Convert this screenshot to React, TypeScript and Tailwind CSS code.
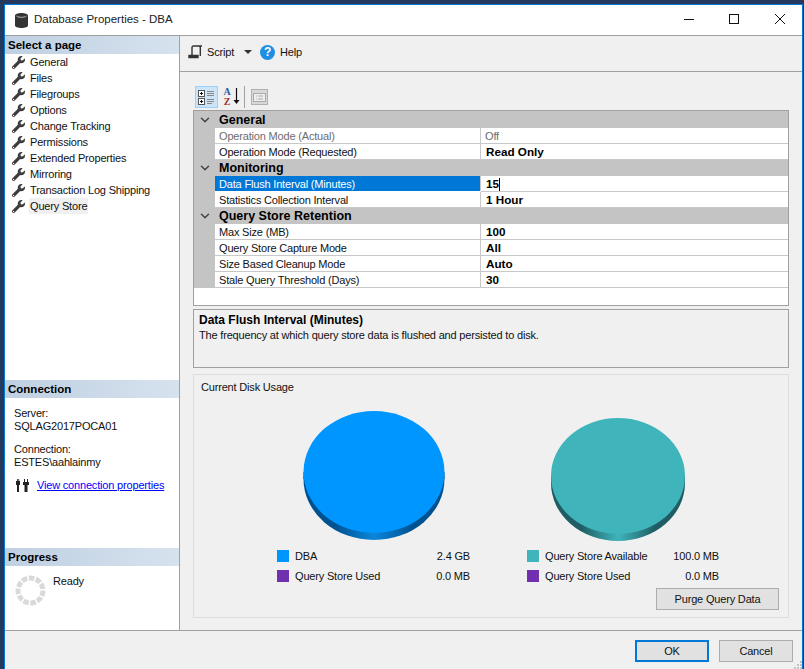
import React from "react";
import { FaWrench } from "react-icons/fa";
import { ChevronDown } from "lucide-react";

const pages = [
  "General",
  "Files",
  "Filegroups",
  "Options",
  "Change Tracking",
  "Permissions",
  "Extended Properties",
  "Mirroring",
  "Transaction Log Shipping",
  "Query Store",
];

type Row = { name: string; value: string; dim?: boolean; selected?: boolean };
type Group = { title: string; tall?: boolean; rows: Row[] };

const groups: Group[] = [
  {
    title: "General",
    tall: true,
    rows: [
      { name: "Operation Mode (Actual)", value: "Off", dim: true },
      { name: "Operation Mode (Requested)", value: "Read Only" },
    ],
  },
  {
    title: "Monitoring",
    rows: [
      { name: "Data Flush Interval (Minutes)", value: "15", selected: true },
      { name: "Statistics Collection Interval", value: "1 Hour" },
    ],
  },
  {
    title: "Query Store Retention",
    rows: [
      { name: "Max Size (MB)", value: "100" },
      { name: "Query Store Capture Mode", value: "All" },
      { name: "Size Based Cleanup Mode", value: "Auto" },
      { name: "Stale Query Threshold (Days)", value: "30" },
    ],
  },
];

const SectionHeader = ({ title }: { title: string }) => (
  <div className="h-[18px] flex items-center pl-[3px] pt-[2px] bg-gradient-to-r from-[#bfd0e2] to-[#d6e2ee] text-[11.5px] tracking-normal font-bold text-black leading-none">
    {title}
  </div>
);

const Pie = ({ id, cx, cy, rx, ry, top, edge, mid }: { id: string; cx: number; cy: number; rx: number; ry: number; top: string; edge: string; mid: string }) => (
  <svg width="193" height="133" viewBox="0 0 193 133" className="block">
    <defs>
      <linearGradient id={id} x1="0" x2="1" y1="0" y2="0">
        <stop offset="0" stopColor={edge} />
        <stop offset="0.22" stopColor={edge} />
        <stop offset="0.5" stopColor={mid} />
        <stop offset="0.78" stopColor={edge} />
        <stop offset="1" stopColor={edge} />
      </linearGradient>
    </defs>
    <ellipse cx={cx} cy={cy + 7} rx={rx} ry={ry} fill={`url(#${id})`} />
    <rect x={cx - rx} y={cy} width={rx * 2} height={7} fill={edge} />
    <ellipse cx={cx} cy={cy} rx={rx} ry={ry} fill={top} />
  </svg>
);

const LegendRow = ({ color, label, value }: { color: string; label: string; value: string }) => (
  <div className="h-3 flex items-center leading-none text-[#111]">
    <span className={`w-3 h-3 shrink-0 ${color}`} />
    <span className="ml-[6px]">{label}</span>
    <span className="ml-auto">{value}</span>
  </div>
);

const Spinner = () => (
  <svg width="31" height="31" viewBox="0 0 31 31">
    <circle cx="15.5" cy="15.5" r="12.5" fill="none" stroke="#d9d9d9" strokeWidth="5" strokeDasharray="5.5 1.6" />
  </svg>
);

export default function App() {
  return (
    <div className="h-[669px] w-[804px] overflow-hidden bg-[#25395e] pt-1 pl-1 pr-px font-['Liberation_Sans',sans-serif] text-[11px] tracking-[-0.18px] text-[#111]">
      <div className="h-[665px] flex flex-col border-t border-l border-r border-[#0078d7] bg-[#f0f0f0]">
        {/* title bar */}
        <div className="h-[31px] shrink-0 flex items-center bg-white border-b border-[#a0a0a0] relative">
          <svg width="13" height="15" viewBox="0 0 13 15" className="ml-[10px]">
            <path d="M0 2.5C0 1 3 0 6.5 0S13 1 13 2.5v10c0 1.5-3 2.5-6.5 2.5S0 14 0 12.5z" fill="#333" />
            <path d="M1.5 3c1 .9 3 1.3 5 1.3s4-.4 5-1.3" fill="none" stroke="#ddd" strokeWidth="0.8" />
          </svg>
          <span className="ml-[6px] text-[11.5px] tracking-normal text-[#222]">Database Properties - DBA</span>
          <div className="ml-auto flex items-center pr-[17px] -mt-[2px]">
            <svg width="10" height="11" viewBox="0 0 10 11" className="mr-[35px]"><path d="M0 5.5h10" stroke="#111" /></svg>
            <svg width="10" height="10" viewBox="0 0 10 10" className="mr-[36px]"><rect x="0.5" y="0.5" width="9" height="9" fill="none" stroke="#111" /></svg>
            <svg width="10" height="10" viewBox="0 0 10 10"><path d="M0 0l10 10M10 0L0 10" stroke="#111" /></svg>
          </div>
        </div>

        <div className="flex h-[595px] shrink-0 border-b border-[#a0a0a0]">
          {/* sidebar */}
          <div className="w-[175px] shrink-0 bg-white border-r border-[#a0a0a0] flex flex-col">
            <SectionHeader title="Select a page" />
            <div className="flex-1">
              {pages.map((p) => (
                <div key={p} className="h-4 flex items-center pl-[7px]">
                  <FaWrench className="w-[13px] h-[13px] text-[#3c3c3c] shrink-0" />
                  <span className={`ml-1 px-px leading-4 ${p === "Query Store" ? "bg-[#f0f0f0]" : ""}`}>{p}</span>
                </div>
              ))}
            </div>
            <SectionHeader title="Connection" />
            <div className="h-[150px] pl-[9px] pt-[9px] leading-[13px]">
              <div>Server:</div>
              <div>SQLAG2017POCA01</div>
              <div className="mt-[10px]">Connection:</div>
              <div>ESTES\aahlainmy</div>
              <div className="mt-[10px] flex items-center">
                <svg width="15" height="13" viewBox="0 0 15 13" className="ml-px">
                  <path d="M1 2h4v4H4v7H2V6H1zM2 0h.8v2H2zM3.4 0h.8v2h-.8z" fill="#222" />
                  <path d="M8 3h6v3h-1.5v7h-3V6H8zM9 0h1v3H9zM12 0h1v3h-1z" fill="#222" />
                </svg>
                <a className="ml-[7px] text-[#0000ff] underline leading-[13px]">View connection properties</a>
              </div>
            </div>
            <SectionHeader title="Progress" />
            <div className="h-[64px] flex items-start pl-[10px] pt-[9px]">
              <Spinner />
              <span className="ml-[7px] -mt-[2px]">Ready</span>
            </div>
          </div>

          {/* main */}
          <div className="flex-1 flex flex-col min-w-0">
            <div className="h-[36px] shrink-0 flex items-center border-b border-[#a0a0a0] pl-2 pb-[3px]">
              <svg width="15" height="14" viewBox="0 0 15 14" fill="none" stroke="#333" strokeWidth="1.4">
                <path d="M4 12V2.5C4 1.5 4.5 1 5.5 1H14M11 1c1 0 1.3.7 1.3 1.5V11" />
                <path d="M1 10.5v2h9v-2z" fill="#333" />
              </svg>
              <span className="ml-[4px] w-[26px]">Script</span>
              <svg width="8" height="4" viewBox="0 0 8 4" className="ml-[11px]"><path d="M0 0h8L4 4z" fill="#333" /></svg>
              <span className="ml-2 w-[15px] h-[15px] rounded-full bg-[#1e8fe1] text-white font-bold text-[12px] leading-[15px] text-center">?</span>
              <span className="ml-[5px]">Help</span>
            </div>

            <div className="flex-1 px-[13px] pt-[14px] flex flex-col">
              {/* grid toolbar */}
              <div className="h-[24px] shrink-0 flex items-start pl-[2px]">
                <div className="w-[23px] h-[22px] bg-[#cce4f7] border border-[#99d1ff] flex items-center justify-center">
                  <svg width="17" height="17" viewBox="0 0 17 17">
                    <rect x="0.5" y="1.5" width="6" height="6" fill="#fff" stroke="#555" />
                    <path d="M2 4.5h3M3.5 3v3" stroke="#111" />
                    <rect x="0.5" y="9.5" width="6" height="6" fill="#fff" stroke="#555" />
                    <path d="M2 12.5h3M3.5 11v3" stroke="#111" />
                    <path d="M9 2.5h7M9 4.5h7M9 6.5h7M9 10.5h7M9 12.5h7M9 14.5h5" stroke="#888" />
                  </svg>
                </div>
                <div className="w-[12px] ml-[3px] flex flex-col items-center font-['Liberation_Serif',serif] font-bold text-[10px] leading-[10px] pt-px tracking-normal">
                  <span className="text-[#2b5aa8]">A</span>
                  <span className="text-[#a03030]">Z</span>
                </div>
                <svg width="7" height="18" viewBox="0 0 7 18" className="mt-[2px]"><path d="M3.5 0v14" stroke="#111" strokeWidth="1.2" /><path d="M0.5 12h6l-3 4z" fill="#111" /></svg>
                <div className="w-px h-[22px] bg-[#a0a0a0] ml-[4px]" />
                <svg width="17" height="16" viewBox="0 0 17 16" className="ml-[6px] mt-[3px]">
                  <rect x="0.5" y="0.5" width="16" height="15" fill="#d8d8d8" stroke="#b0b0b0" />
                  <rect x="2.5" y="4.5" width="12" height="8" fill="#eee" stroke="#aaa" />
                  <path d="M5 7h1M7 7h5M5 10h1M7 10h5" stroke="#aaa" />
                </svg>
              </div>

              {/* property grid */}
              <div className="h-[196px] shrink-0 border border-[#a0a0a0] bg-white">
                {groups.map((g) => (
                  <div key={g.title}>
                    <div className={`${g.tall ? "h-[17px]" : "h-4"} flex items-center bg-[#c4c4c4]`}>
                      <ChevronDown className="w-[14px] h-[14px] ml-[4px] text-[#444]" strokeWidth={2.5} />
                      <span className={`ml-[7px] font-bold text-[12.5px] tracking-normal text-black leading-none ${g.tall ? "pt-px" : ""}`}>{g.title}</span>
                    </div>
                    {g.rows.map((r) => (
                      <div key={r.name} className="h-4 flex">
                        <div className="w-[21px] shrink-0 bg-[#c4c4c4]" />
                        <div
                          className={`w-[266px] shrink-0 pl-1 pt-px leading-[14px] border-r border-[#c8c8c8] ${
                            r.selected ? "bg-[#0078d7] text-white h-[15px]" : "border-b"
                          } ${r.dim ? "text-[#6d6d6d]" : ""}`}
                        >
                          {r.name}
                        </div>
                        <div
                          className={`flex-1 pt-px leading-[14px] border-b border-[#c8c8c8] ${
                            r.dim ? "pl-1 text-[#6d6d6d] font-normal" : "pl-[5px] font-bold text-black text-[11.7px] tracking-normal"
                          }`}
                        >
                          {r.value}
                          {r.selected && <span className="inline-block w-px h-[13px] bg-black align-middle" />}
                        </div>
                      </div>
                    ))}
                  </div>
                ))}
              </div>

              {/* description */}
              <div className="h-[59px] shrink-0 mt-[3px] border border-[#a0a0a0] px-[5px] pt-[3px]">
                <div className="font-bold text-[12px] tracking-normal text-black leading-[15px]">Data Flush Interval (Minutes)</div>
                <div className="leading-[15px]">The frequency at which query store data is flushed and persisted to disk.</div>
              </div>

              {/* disk usage */}
              <div className="h-[244px] shrink-0 mt-[6px] border border-[#dcdcdc] flex flex-col">
                <div className="h-[14px] mt-[5px] ml-[7px] leading-[14px]">Current Disk Usage</div>
                <div className="flex mt-[17px] pl-[83px] gap-[57px]">
                  <div className="w-[193px]">
                    <Pie id="pieA" cx={97} cy={61} rx={70.5} ry={61} top="#0096ff" edge="#00518f" mid="#0a86dc" />
                    <div className="mt-[6px] flex flex-col gap-2">
                      <LegendRow color="bg-[#0096ff]" label="DBA" value="2.4 GB" />
                      <LegendRow color="bg-[#7030b0]" label="Query Store Used" value="0.0 MB" />
                    </div>
                  </div>
                  <div className="w-[192px]">
                    <Pie id="pieB" cx={91} cy={65} rx={67} ry={58} top="#3fb4bb" edge="#1f5c63" mid="#3fb4bb" />
                    <div className="mt-[6px] flex flex-col gap-2">
                      <LegendRow color="bg-[#3fb4bb]" label="Query Store Available" value="100.0 MB" />
                      <LegendRow color="bg-[#7030b0]" label="Query Store Used" value="0.0 MB" />
                    </div>
                  </div>
                </div>
                <button className="self-end mr-[9px] mt-[6px] w-[123px] h-[22px] bg-[#e1e1e1] border border-[#adadad] leading-none">
                  Purge Query Data
                </button>
              </div>
            </div>
          </div>
        </div>

        {/* footer */}
        <div className="flex-1 relative flex justify-end items-start gap-[10px] pt-[9px] pr-[9px]">
          <button className="w-[74px] h-[22px] bg-[#e1e1e1] border-2 border-[#0078d7] leading-none">OK</button>
          <button className="w-[74px] h-[22px] bg-[#e1e1e1] border border-[#adadad] leading-none">Cancel</button>
          <svg width="8" height="8" viewBox="0 0 8 8" className="absolute right-0 bottom-0">
            <path d="M6 0h2v2H6zM3 3h2v2H3zM6 3h2v2H6zM0 6h2v2H0zM3 6h2v2H3zM6 6h2v2H6z" fill="#c4c4c4" />
          </svg>
        </div>
      </div>
    </div>
  );
}
